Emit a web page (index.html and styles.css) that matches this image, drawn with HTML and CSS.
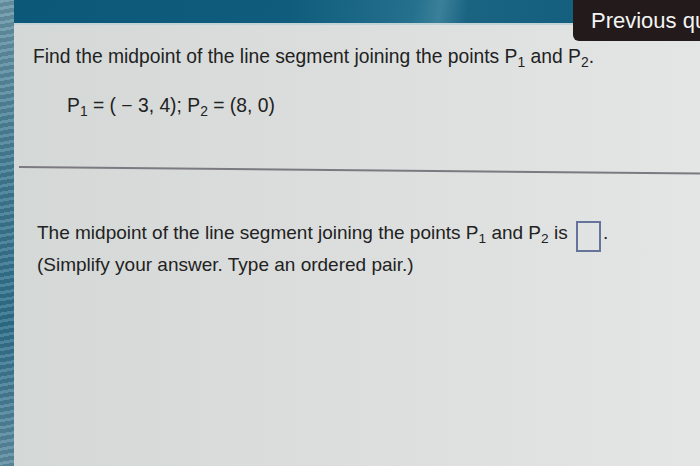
FILE: index.html
```html
<!DOCTYPE html>
<html>
<head>
<meta charset="utf-8">
<link rel="stylesheet" href="styles.css">
</head>
<body>
<div class="page">
  <div class="strip"></div>
  <div class="main">
    <div class="topbar"></div>
    <div class="prev">Previous qu</div>
    <div class="content">
      <p class="q">Find the midpoint of the line segment joining the points P<sub>1</sub> and P<sub>2</sub>.</p>
      <p class="pts">P<sub>1</sub> = ( − 3, 4); P<sub>2</sub> = (8, 0)</p>
      <div class="rule"></div>
      <p class="ans">The midpoint of the line segment joining the points P<sub>1</sub> and P<sub>2</sub> is <span class="box"></span>.</p>
      <p class="hint">(Simplify your answer. Type an ordered pair.)</p>
    </div>
  </div>
</div>
</body>
</html>
```
FILE: styles.css
```css
html, body { margin: 0; padding: 0; }
body { width: 700px; height: 466px; overflow: hidden; font-family: "Liberation Sans", Arial, sans-serif; }
.page { display: flex; width: 700px; height: 466px; }
.strip {
  width: 14px; flex: none;
  background:
    repeating-linear-gradient(170deg, rgba(255,255,255,0.12) 0 3px, rgba(0,0,0,0.08) 3px 7px),
    linear-gradient(180deg, #6a96a8 0%, #3f7a93 40%, #2f6f8c 70%, #5e8da2 100%);
}
.main {
  position: relative; flex: 1;
  background: linear-gradient(90deg, #d4d8d7 0%, #dadddc 40%, #e0e2e1 75%, #e4e6e5 100%);
  display: flex; flex-direction: column;
}
.topbar {
  height: 23px; flex: none;
  background: linear-gradient(100deg, #0c5878 0%, #0f5c7c 40%, #24708d 58%, #3a8099 62%, #1a6482 66%, #0d5a7a 100%);
  border-bottom: 2px solid #c3d2d6;
}
.prev {
  position: absolute; top: 0; right: 0; left: 559px; height: 41px;
  background: #231b1b; border-bottom-left-radius: 6px;
  color: #f4f4f4; font-size: 22px; line-height: 41px; padding-left: 18px;
  white-space: nowrap; overflow: hidden;
}
.content { color: #222; font-size: 19.3px; }
.content p { margin: 0; white-space: nowrap; }
sub { font-size: 0.72em; vertical-align: -0.3em; line-height: 0; }
.q { margin-top: 21px !important; padding-left: 19px; line-height: 22px; }
.pts { margin-top: 27px !important; padding-left: 53px; line-height: 22px; }
.rule {
  margin: 49px 0 0 5px; height: 2px; background: #7b7a80;
  transform: rotate(0.55deg); transform-origin: left center;
}
.ans { margin-top: 50px !important; padding-left: 23px; line-height: 30px; font-size: 19px; }
.box {
  display: inline-block; width: 21px; height: 27px; border: 2px solid #66739a;
  vertical-align: -13px; margin-left: 3px; margin-right: 2px;
}
.hint { margin-top: -2px !important; padding-left: 23px; line-height: 30px; font-size: 19px; }
```
